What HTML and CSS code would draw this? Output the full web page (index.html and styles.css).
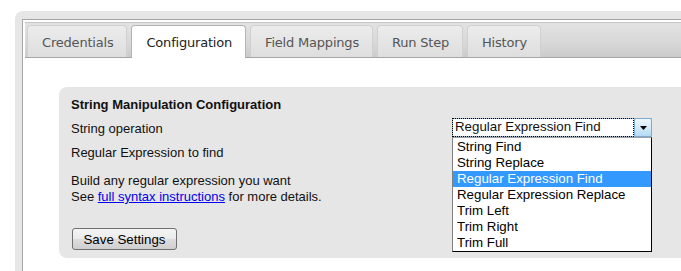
FILE: index.html
```html
<!DOCTYPE html>
<html>
<head>
<meta charset="utf-8">
<link rel="stylesheet" href="styles.css">
</head>
<body>
<div class="outer">
  <div class="tabs">
    <ul class="nav">
      <li class="tab">Credentials</li>
      <li class="tab active">Configuration</li>
      <li class="tab">Field Mappings</li>
      <li class="tab">Run Step</li>
      <li class="tab">History</li>
    </ul>
    <div class="panel">
      <div class="box">
        <div class="heading">String Manipulation Configuration</div>
        <div class="row">
          <div class="label op">String operation</div>
          <div class="select-wrap">
            <div class="select">
              <span class="select-text">Regular Expression Find</span>
              <span class="select-btn"><svg width="7" height="4" viewBox="0 0 7 4"><path d="M0 0h7L3.5 4z" fill="#000"/></svg></span>
            </div>
            <ul class="list">
              <li>String Find</li>
              <li>String Replace</li>
              <li class="sel">Regular Expression Find</li>
              <li>Regular Expression Replace</li>
              <li>Trim Left</li>
              <li>Trim Right</li>
              <li>Trim Full</li>
            </ul>
          </div>
        </div>
        <div class="label find">Regular Expression to find</div>
        <div class="help">
          <div>Build any regular expression you want</div>
          <div>See <a href="#">full syntax instructions</a> for more details.</div>
        </div>
        <button class="btn">Save Settings</button>
      </div>
    </div>
  </div>
</div>
</body>
</html>
```
FILE: styles.css
```css
html, body {
  margin: 0;
  padding: 0;
  background: #fff;
  overflow: hidden;
  width: 681px;
  height: 271px;
}
body {
  padding: 11px 0 0 15px;
  box-sizing: border-box;
}
.outer {
  width: 720px;
  height: 320px;
  background: #e6e6e6;
  border-top-left-radius: 8px;
  padding: 8px 0 0 7px;
  box-sizing: border-box;
}
.tabs {
  border: 1px solid #a6a6a6;
  background: #fff;
  padding: 2px;
  height: 400px;
  box-sizing: border-box;
}
.nav {
  list-style: none;
  margin: 0;
  padding: 3px 0 0 2px;
  height: 36px;
  box-sizing: border-box;
  display: flex;
  gap: 4px;
  align-items: flex-end;
  border-top: 1px solid #c4c4c4;
  border-bottom: 1px solid #a6a6a6;
  background: linear-gradient(#e2e2e2, #d8d8d8 60%, #cbcbcb);
}
.tab {
  font-family: "DejaVu Sans", Verdana, sans-serif;
  font-size: 13px;
  color: #555;
  height: 32px;
  line-height: 33px;
  padding: 0 13px 0 14px;
  border: 1px solid #d0d0d0;
  border-bottom: 0;
  border-radius: 4px 4px 0 0;
  background: linear-gradient(#ececec, #dedede);
  box-sizing: border-box;
  letter-spacing: -0.2px;
}
.tab.active {
  background: #fff;
  color: #222;
  border-color: #b4b4b4;
  height: 33px;
  margin-bottom: -1px;
}
.panel {
  padding: 29px 0 0 34px;
}
.box {
  background: #e6e6e6;
  border-radius: 8px 0 0 8px;
  padding: 10px 0 8px 12px;
  font-family: "Liberation Sans", Arial, sans-serif;
  font-size: 13px;
  line-height: 16px;
  color: #111;
}
.heading {
  font-weight: bold;
  margin-bottom: 5px;
}
.row {
  display: flex;
  align-items: flex-start;
}
.label.op {
  flex: 0 0 381px;
  padding-top: 3px;
}
.select-wrap {
  position: relative;
  width: 200px;
}
.select {
  display: flex;
  height: 19px;
  background: #fff;
  border: 1px solid #9fb3c6;
  border-right: 0;
  box-sizing: border-box;
}
.select-text {
  flex: 1;
  outline: 1px dotted #000;
  outline-offset: -1px;
  padding: 1px 0 0 3px;
  line-height: 16px;
  margin: -1px 0 0 -1px;
  height: 19px;
  box-sizing: border-box;
  font-size: 13.3px;
}
.select-btn {
  width: 18px;
  height: 19px;
  margin-top: -1px;
  box-sizing: border-box;
  border: 1px solid #7ea9d2;
  border-radius: 2px;
  background: linear-gradient(#eef7fd, #d3ebfa 50%, #b5daf4);
  display: flex;
  align-items: center;
  justify-content: center;
}
.select-btn svg {
  margin-top: 1px;
}
.list {
  position: absolute;
  top: 19px;
  left: 0;
  width: 200px;
  margin: 0;
  padding: 1px 0 0;
  list-style: none;
  background: #fff;
  border: 1px solid #000;
  border-left-color: #808080;
  border-top-color: #a0a0a0;
  box-sizing: border-box;
  font-size: 13.3px;
}
.list li {
  height: 16px;
  line-height: 16px;
  padding-left: 4px;
  color: #000;
}
.list li.sel {
  background: #3399ff;
  color: #fff;
}
.label.find {
  margin-top: 8px;
}
.help {
  margin-top: 12px;
}
.help a {
  color: #0000ee;
}
.btn {
  display: block;
  margin: 23px 0 0 1px;
  width: 105px;
  height: 22px;
  padding: 0;
  font-family: "Liberation Sans", Arial, sans-serif;
  font-size: 13.3px;
  color: #000;
  border: 1px solid #707070;
  border-radius: 3px;
  background: linear-gradient(#f4f4f4, #ebebeb 50%, #dddddd 51%, #cfcfcf);
}
```
